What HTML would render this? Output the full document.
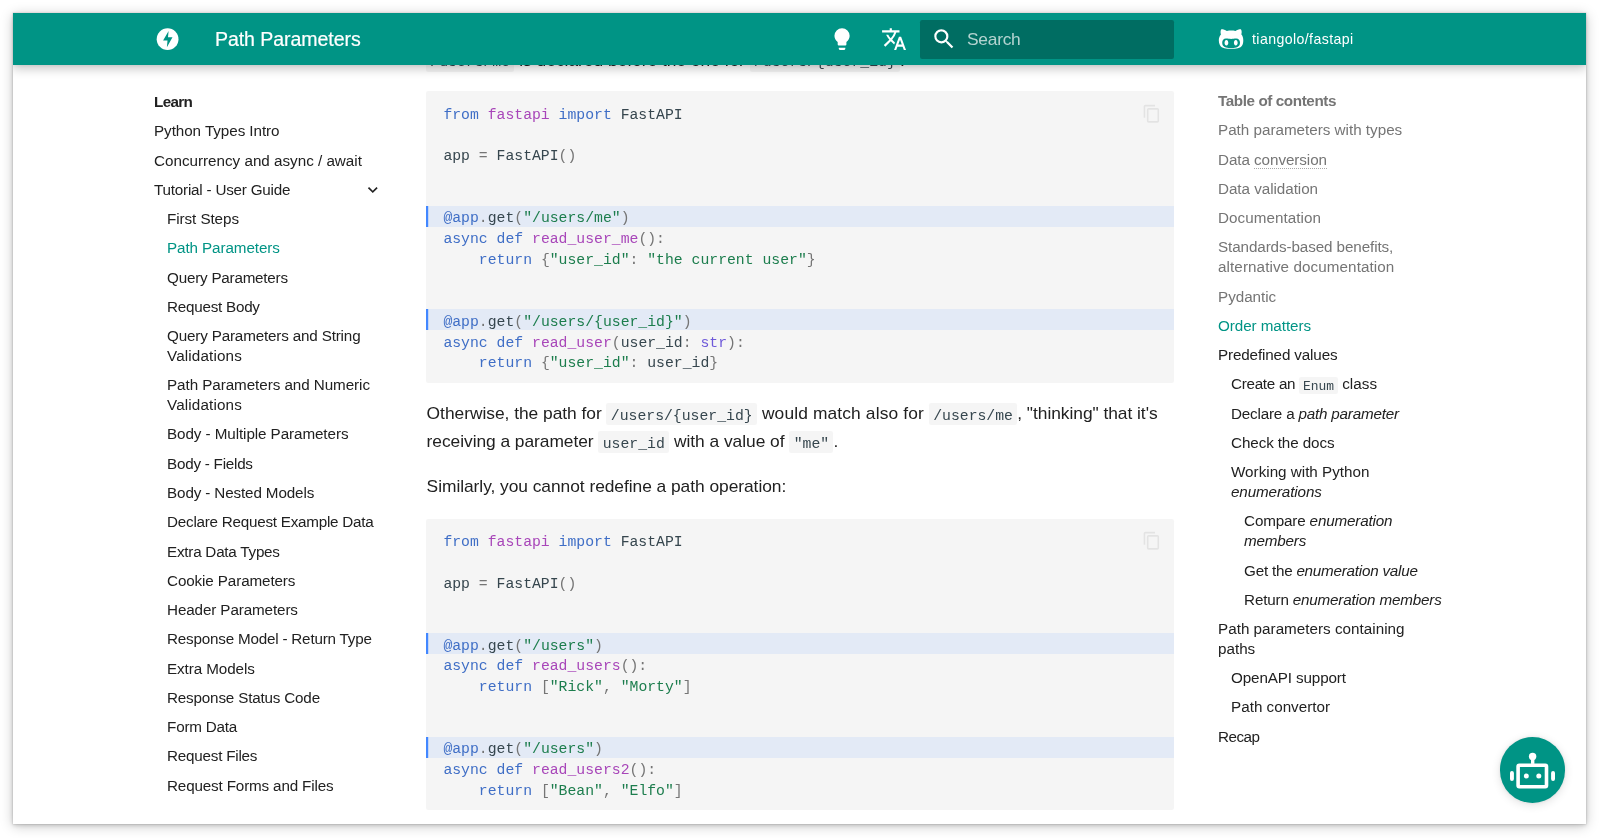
<!DOCTYPE html>
<html lang="en">
<head>
<meta charset="utf-8">
<title>Path Parameters - FastAPI</title>
<style>
html{font-size:21.74px;}
*{box-sizing:border-box;}
body{margin:0;padding:0;width:1600px;height:838px;overflow:hidden;background:#fff;
  font-family:"Liberation Sans",sans-serif;color:#212121;
  -webkit-font-smoothing:antialiased;}
#win{position:absolute;left:13px;top:13px;width:1573px;height:810.5px;background:#fff;overflow:hidden;
  box-shadow:0 0 0 0.5px rgba(0,0,0,.08),0 1px 4px rgba(0,0,0,.18),0 2px 12px rgba(0,0,0,.22);}
.t{white-space:pre;display:inline-block;}
#left,#toc,#content,#title,#search .ph,#repo{will-change:transform;}
/* ---------- header ---------- */
#hdr{position:absolute;left:0;top:0;width:100%;height:52.2px;background:#009485;color:#fff;z-index:10;
  box-shadow:0 0 4.35px rgba(0,0,0,.1),0 4.6px 9.6px rgba(0,0,0,.2);}
#hdr svg{position:absolute;fill:#fff;display:block;}
#title{position:absolute;left:201.7px;top:0;height:52.2px;line-height:52.2px;font-size:19.57px;white-space:nowrap;-webkit-text-stroke:0.2px #fff;}
#search{position:absolute;left:907px;top:6.8px;width:254.4px;height:39.1px;background:#006d62;border-radius:2.2px;}
#search .ph{position:absolute;left:46.9px;top:0;height:39.1px;line-height:39.1px;font-size:17.39px;color:rgba(255,255,255,.7);}
#repo{position:absolute;left:1238.6px;top:0;height:53.6px;line-height:53.6px;font-size:14.13px;white-space:nowrap;}
/* ---------- sidebars ---------- */
.nav{position:absolute;font-size:15.22px;line-height:19.78px;}
.nav div{margin-top:9.51px;white-space:nowrap;}
.nav div:first-child{margin-top:0;}
.nav .b{font-weight:700;}
.nav .l1{padding-left:13.04px;}
.nav .l2{padding-left:26.08px;}
.nav .act{color:#009485;}
#left{left:141.1px;top:78.6px;width:250px;}
#toc{left:1204.8px;top:78.2px;width:260px;}
#toc .g{color:#757575;}
#toc div{margin-top:9.53px;}
#toc div:first-child{margin-top:0;}
#toc code{font-family:"Liberation Mono",monospace;font-size:12.94px;background:#f5f5f5;color:#36464e;
  padding:1.5px 3.8px 0.2px;border-radius:2.2px;letter-spacing:0;display:inline;line-height:1;}
abbr{text-decoration:none;border-bottom:1px dotted #a8a8a8;padding-bottom:0.6px;}
/* ---------- content ---------- */
#content{position:absolute;left:412.6px;top:33.0px;width:748.0px;font-size:17.39px;line-height:27.83px;}
#content p{margin:17.39px 0;white-space:nowrap;position:relative;top:0.1px;left:0.6px;}
#content p:first-child{margin-top:0;top:1.1px;left:0;}
#content p code{font-family:"Liberation Mono",monospace;font-size:14.78px;background:#f5f5f5;color:#36464e;
  padding:4.7px 4.35px 1.6px;border-radius:2.2px;display:inline;line-height:1;}
pre{position:relative;margin:17.39px 0;padding:11.41px 17.39px;background:#f5f5f5;color:#36464e;
  font-family:"Liberation Mono",monospace;font-size:14.78px;line-height:20.69px;border-radius:2.2px;overflow:hidden;}
pre .ln{display:block;height:20.69px;white-space:pre;}
pre .ln>span{position:relative;top:2.4px;}
pre .hl{margin:0 -17.39px;padding:0 17.39px;background:#e3eaf6;box-shadow:2.2px 0 0 0 #4287ff inset;}
pre svg{position:absolute;right:12.1px;top:12.5px;width:19.56px;height:19.56px;fill:rgba(0,0,0,.07);}
.k{color:#3f6ec6;}.f{color:#a846b9;}.s{color:#1c7d4d;}.p{color:#757575;}.c{color:#6e59d9;}
/* ---------- bot ---------- */
#bot{position:absolute;left:1486.7px;top:724.2px;width:65.5px;height:65.5px;border-radius:50%;background:#009485;
  box-shadow:0 2px 10px rgba(0,0,0,.12),0 0 3px rgba(0,0,0,.08);z-index:20;}
#bot svg{position:absolute;left:0;top:0;}
</style>
</head>
<body>
<div id="win">

<div id="hdr">
  <svg style="left:140.8px;top:13.05px" width="26.1" height="26.1" viewBox="0 0 26.1 26.1"><circle cx="13.6" cy="13.15" r="10.9"/><path fill="#009485" d="M14.6 4.9 9.1 14.6h4.4l-.6 6.6 5.6-10h-4.5z"/></svg>
  <div id="title"><span class="t" style="letter-spacing:-0.080px">Path Parameters</span></div>
  <svg style="left:815.9px;top:12.9px" width="26.1" height="26.1" viewBox="0 0 24 24"><path d="M12 2a7 7 0 0 0-7 7c0 2.38 1.19 4.47 3 5.74V17a1 1 0 0 0 1 1h6a1 1 0 0 0 1-1v-2.26c1.81-1.27 3-3.36 3-5.74a7 7 0 0 0-7-7M9 21a1 1 0 0 0 1 1h4a1 1 0 0 0 1-1v-1H9v1Z"/></svg>
  <svg style="left:867.6px;top:12.9px" width="26.1" height="26.1" viewBox="0 0 24 24"><path d="m12.87 15.07-2.54-2.51.03-.03A17.52 17.52 0 0 0 14.07 6H17V4h-7V2H8v2H1v2h11.17C11.5 7.92 10.44 9.75 9 11.35 8.07 10.32 7.3 9.19 6.69 8h-2c.73 1.63 1.73 3.17 2.98 4.56l-5.09 5.02L4 19l5-5 3.11 3.11.76-2.04M18.5 10h-2L12 22h2l1.12-3h4.75L21 22h2l-4.5-12m-2.62 7 1.62-4.33L19.12 17h-3.24Z"/></svg>
  <div id="search">
    <svg style="left:11.1px;top:6.3px" width="26.1" height="26.1" viewBox="0 0 24 24"><path d="M9.5 3A6.5 6.5 0 0 1 16 9.5c0 1.61-.59 3.09-1.56 4.23l.27.27h.79l5 5-1.5 1.5-5-5v-.79l-.27-.27A6.516 6.516 0 0 1 9.5 16 6.5 6.5 0 0 1 3 9.5 6.5 6.5 0 0 1 9.500 3m0 2C7 5 5 7 5 9.5S7 14 9.500 14 14 12 14 9.500 12 5 9.500 5Z"/></svg>
    <div class="ph"><span class="t" style="letter-spacing:-0.260px">Search</span></div>
  </div>
  <svg style="left:1204.6px;top:12.7px" width="26.1" height="26.1" viewBox="0 0 480 512"><path d="M186.1 328.7c0 20.9-10.9 55.1-36.7 55.1s-36.700-34.200-36.700-55.100 10.900-55.100 36.700-55.100 36.700 34.200 36.700 55.100zM480 278.200c0 31.900-3.200 65.700-17.500 95-37.900 76.600-142.100 74.800-216.700 74.800-75.800 0-186.200 2.700-225.600-74.800-14.600-29-20.200-63.100-20.200-95 0-41.900 13.900-81.500 41.500-113.600-5.200-15.800-7.700-32.400-7.700-48.800 0-21.500 4.900-32.300 14.600-51.800 45.300 0 74.300 9 108.800 36 29-6.900 58.800-10 88.700-10 27 0 54.200 2.900 80.400 9.200 34-26.700 63-35.200 107.800-35.200 9.800 19.500 14.600 30.300 14.600 51.800 0 16.400-2.600 32.700-7.700 48.200 27.500 32.400 39 72.300 39 114.200zm-64.300 50.500c0-43.900-26.700-82.600-73.500-82.600-18.900 0-37 3.400-56 6-14.900 2.300-29.800 3.200-45.100 3.200-15.200 0-30.100-.9-45.100-3.200-18.700-2.600-37-6-56-6-46.800 0-73.500 38.700-73.500 82.600 0 87.800 80.400 101.300 150.400 101.300h48.200c70.300 0 150.600-13.400 150.600-101.300zm-82.600-55.100c-25.800 0-36.700 34.200-36.700 55.100s10.900 55.100 36.700 55.100 36.700-34.200 36.700-55.100-10.900-55.100-36.700-55.100z"/></svg>
  <div id="repo"><span class="t" style="letter-spacing:0.411px">tiangolo/fastapi</span></div>
</div>


<div id="left" class="nav">
  <div class="b"><span class="t" style="letter-spacing:-0.651px">Learn</span></div>
  <div><span class="t" style="letter-spacing:-0.062px">Python Types Intro</span></div>
  <div><span class="t" style="letter-spacing:-0.007px">Concurrency and async / await</span></div>
  <div><span class="t" style="letter-spacing:-0.209px">Tutorial - User Guide</span><svg style="position:absolute;left:209.3px;top:87.8px" width="19.57" height="19.57" viewBox="0 0 24 24"><path fill="#212121" d="M7.41 8.58 12 13.17l4.59-4.590L18 10l-6 6-6-6 1.41-1.420Z"/></svg></div>
  <div class="l1"><span class="t" style="letter-spacing:-0.076px">First Steps</span></div>
  <div class="l1 act"><span class="t" style="letter-spacing:-0.100px">Path Parameters</span></div>
  <div class="l1"><span class="t" style="letter-spacing:-0.221px">Query Parameters</span></div>
  <div class="l1"><span class="t" style="letter-spacing:-0.242px">Request Body</span></div>
  <div class="l1"><span class="t" style="letter-spacing:-0.168px">Query Parameters and String</span><br><span class="t" style="letter-spacing:0.143px">Validations</span></div>
  <div class="l1"><span class="t" style="letter-spacing:-0.067px">Path Parameters and Numeric</span><br><span class="t" style="letter-spacing:0.143px">Validations</span></div>
  <div class="l1"><span class="t" style="letter-spacing:-0.083px">Body - Multiple Parameters</span></div>
  <div class="l1"><span class="t" style="letter-spacing:-0.239px">Body - Fields</span></div>
  <div class="l1"><span class="t" style="letter-spacing:-0.132px">Body - Nested Models</span></div>
  <div class="l1"><span class="t" style="letter-spacing:-0.238px">Declare Request Example Data</span></div>
  <div class="l1"><span class="t" style="letter-spacing:-0.235px">Extra Data Types</span></div>
  <div class="l1"><span class="t" style="letter-spacing:-0.116px">Cookie Parameters</span></div>
  <div class="l1"><span class="t" style="letter-spacing:-0.118px">Header Parameters</span></div>
  <div class="l1"><span class="t" style="letter-spacing:-0.202px">Response Model - Return Type</span></div>
  <div class="l1"><span class="t" style="letter-spacing:-0.093px">Extra Models</span></div>
  <div class="l1"><span class="t" style="letter-spacing:-0.181px">Response Status Code</span></div>
  <div class="l1"><span class="t" style="letter-spacing:-0.199px">Form Data</span></div>
  <div class="l1"><span class="t" style="letter-spacing:-0.219px">Request Files</span></div>
  <div class="l1"><span class="t" style="letter-spacing:-0.157px">Request Forms and Files</span></div>
</div>


<div id="content">
  <p><code>/users/me</code><span class="t" style="letter-spacing:-0.015px"> is declared before the one for </span><code>/users/{user_id}</code>:</p>
<pre><svg viewBox="0 0 24 24"><path d="M19 21H8V7h11m0-2H8a2 2 0 0 0-2 2v14a2 2 0 0 0 2 2h11a2 2 0 0 0 2-2V7a2 2 0 0 0-2-2m-3-4H4a2 2 0 0 0-2 2v14h2V3h12V1Z"/></svg><span class="ln"><span><span class="k">from</span> <span class="f">fastapi</span> <span class="k">import</span> FastAPI</span></span><span class="ln"></span><span class="ln"><span>app <span class="p">=</span> FastAPI<span class="p">()</span></span></span><span class="ln"></span><span class="ln"></span><span class="ln hl"><span><span class="k">@app</span><span class="p">.</span>get<span class="p">(</span><span class="s">"/users/me"</span><span class="p">)</span></span></span><span class="ln"><span><span class="k">async</span> <span class="k">def</span> <span class="f">read_user_me</span><span class="p">():</span></span></span><span class="ln"><span>    <span class="k">return</span> <span class="p">{</span><span class="s">"user_id"</span><span class="p">:</span> <span class="s">"the current user"</span><span class="p">}</span></span></span><span class="ln"></span><span class="ln"></span><span class="ln hl"><span><span class="k">@app</span><span class="p">.</span>get<span class="p">(</span><span class="s">"/users/</span><span class="s">{user_id}</span><span class="s">"</span><span class="p">)</span></span></span><span class="ln"><span><span class="k">async</span> <span class="k">def</span> <span class="f">read_user</span><span class="p">(</span>user_id<span class="p">:</span> <span class="c">str</span><span class="p">):</span></span></span><span class="ln"><span>    <span class="k">return</span> <span class="p">{</span><span class="s">"user_id"</span><span class="p">:</span> user_id<span class="p">}</span></span></span></pre>
  <p><span class="t" style="letter-spacing:-0.030px">Otherwise, the path for </span><code>/users/{user_id}</code><span class="t" style="letter-spacing:0.132px"> would match also for </span><code>/users/me</code><span class="t" style="letter-spacing:-0.042px">, "thinking" that it's</span><br><span class="t" style="letter-spacing:-0.049px">receiving a parameter </span><code>user_id</code><span class="t" style="letter-spacing:-0.031px"> with a value of </span><code>"me"</code>.</p>
  <p><span class="t" style="letter-spacing:-0.047px">Similarly, you cannot redefine a path operation:</span></p>
<pre><svg viewBox="0 0 24 24"><path d="M19 21H8V7h11m0-2H8a2 2 0 0 0-2 2v14a2 2 0 0 0 2 2h11a2 2 0 0 0 2-2V7a2 2 0 0 0-2-2m-3-4H4a2 2 0 0 0-2 2v14h2V3h12V1Z"/></svg><span class="ln"><span><span class="k">from</span> <span class="f">fastapi</span> <span class="k">import</span> FastAPI</span></span><span class="ln"></span><span class="ln"><span>app <span class="p">=</span> FastAPI<span class="p">()</span></span></span><span class="ln"></span><span class="ln"></span><span class="ln hl"><span><span class="k">@app</span><span class="p">.</span>get<span class="p">(</span><span class="s">"/users"</span><span class="p">)</span></span></span><span class="ln"><span><span class="k">async</span> <span class="k">def</span> <span class="f">read_users</span><span class="p">():</span></span></span><span class="ln"><span>    <span class="k">return</span> <span class="p">[</span><span class="s">"Rick"</span><span class="p">,</span> <span class="s">"Morty"</span><span class="p">]</span></span></span><span class="ln"></span><span class="ln"></span><span class="ln hl"><span><span class="k">@app</span><span class="p">.</span>get<span class="p">(</span><span class="s">"/users"</span><span class="p">)</span></span></span><span class="ln"><span><span class="k">async</span> <span class="k">def</span> <span class="f">read_users2</span><span class="p">():</span></span></span><span class="ln"><span>    <span class="k">return</span> <span class="p">[</span><span class="s">"Bean"</span><span class="p">,</span> <span class="s">"Elfo"</span><span class="p">]</span></span></span></pre>
</div>


<div id="toc" class="nav">
  <div class="b g"><span class="t" style="letter-spacing:-0.403px">Table of contents</span></div>
  <div class="g"><span class="t" style="letter-spacing:-0.008px">Path parameters with types</span></div>
  <div class="g"><span class="t" style="letter-spacing:-0.066px">Data <abbr>conversion</abbr></span></div>
  <div class="g"><span class="t" style="letter-spacing:-0.046px">Data validation</span></div>
  <div class="g"><span class="t" style="letter-spacing:0.048px">Documentation</span></div>
  <div class="g"><span class="t" style="letter-spacing:-0.099px">Standards-based benefits,</span><br><span class="t" style="letter-spacing:0.085px">alternative documentation</span></div>
  <div class="g"><span class="t" style="letter-spacing:-0.022px">Pydantic</span></div>
  <div class="act"><span class="t" style="letter-spacing:-0.067px">Order matters</span></div>
  <div><span class="t" style="letter-spacing:-0.138px">Predefined values</span></div>
  <div class="l1"><span class="t" style="letter-spacing:-0.288px">Create an </span><code>Enum</code><span class="t" style="letter-spacing:0.049px"> class</span></div>
  <div class="l1"><span class="t" style="letter-spacing:-0.196px">Declare a <em>path parameter</em></span></div>
  <div class="l1"><span class="t" style="letter-spacing:-0.108px">Check the docs</span></div>
  <div class="l1"><span class="t" style="letter-spacing:-0.003px">Working with Python</span><br><span class="t" style="letter-spacing:-0.127px"><em>enumerations</em></span></div>
  <div class="l2"><span class="t" style="letter-spacing:-0.165px">Compare <em>enumeration</em></span><br><span class="t" style="letter-spacing:-0.191px"><em>members</em></span></div>
  <div class="l2"><span class="t" style="letter-spacing:-0.231px">Get the <em>enumeration value</em></span></div>
  <div class="l2"><span class="t" style="letter-spacing:-0.180px">Return <em>enumeration members</em></span></div>
  <div><span class="t" style="letter-spacing:0.014px">Path parameters containing</span><br><span class="t" style="letter-spacing:-0.007px">paths</span></div>
  <div class="l1"><span class="t" style="letter-spacing:-0.130px">OpenAPI support</span></div>
  <div class="l1"><span class="t" style="letter-spacing:0.001px">Path convertor</span></div>
  <div><span class="t" style="letter-spacing:-0.480px">Recap</span></div>
</div>


<div id="bot"><svg width="65.5" height="65.5" viewBox="1500 737.1 65.5 65.5" fill="none" stroke="#fff" stroke-linecap="round" stroke-linejoin="round">
  <rect x="1518.1" y="765.4" width="28.4" height="21.400" rx="1.2" stroke-width="3.6"/>
  <circle cx="1532.6" cy="756.5" r="3.700" fill="#fff" stroke="none"/>
  <path d="M1532.700 758v6" stroke-width="3.400" stroke-linecap="butt"/>
  <circle cx="1526.300" cy="776.100" r="2.500" fill="#fff" stroke="none"/>
  <circle cx="1538.800" cy="776.100" r="2.500" fill="#fff" stroke="none"/>
  <path d="M1511.950 773v6.200M1553.050 773v6.200" stroke-width="3.900"/>
</svg></div>


</div>
<div style="position:absolute;left:13px;top:12px;width:1573px;height:1px;background:rgba(226,222,222,.75)"></div>
</body>
</html>
